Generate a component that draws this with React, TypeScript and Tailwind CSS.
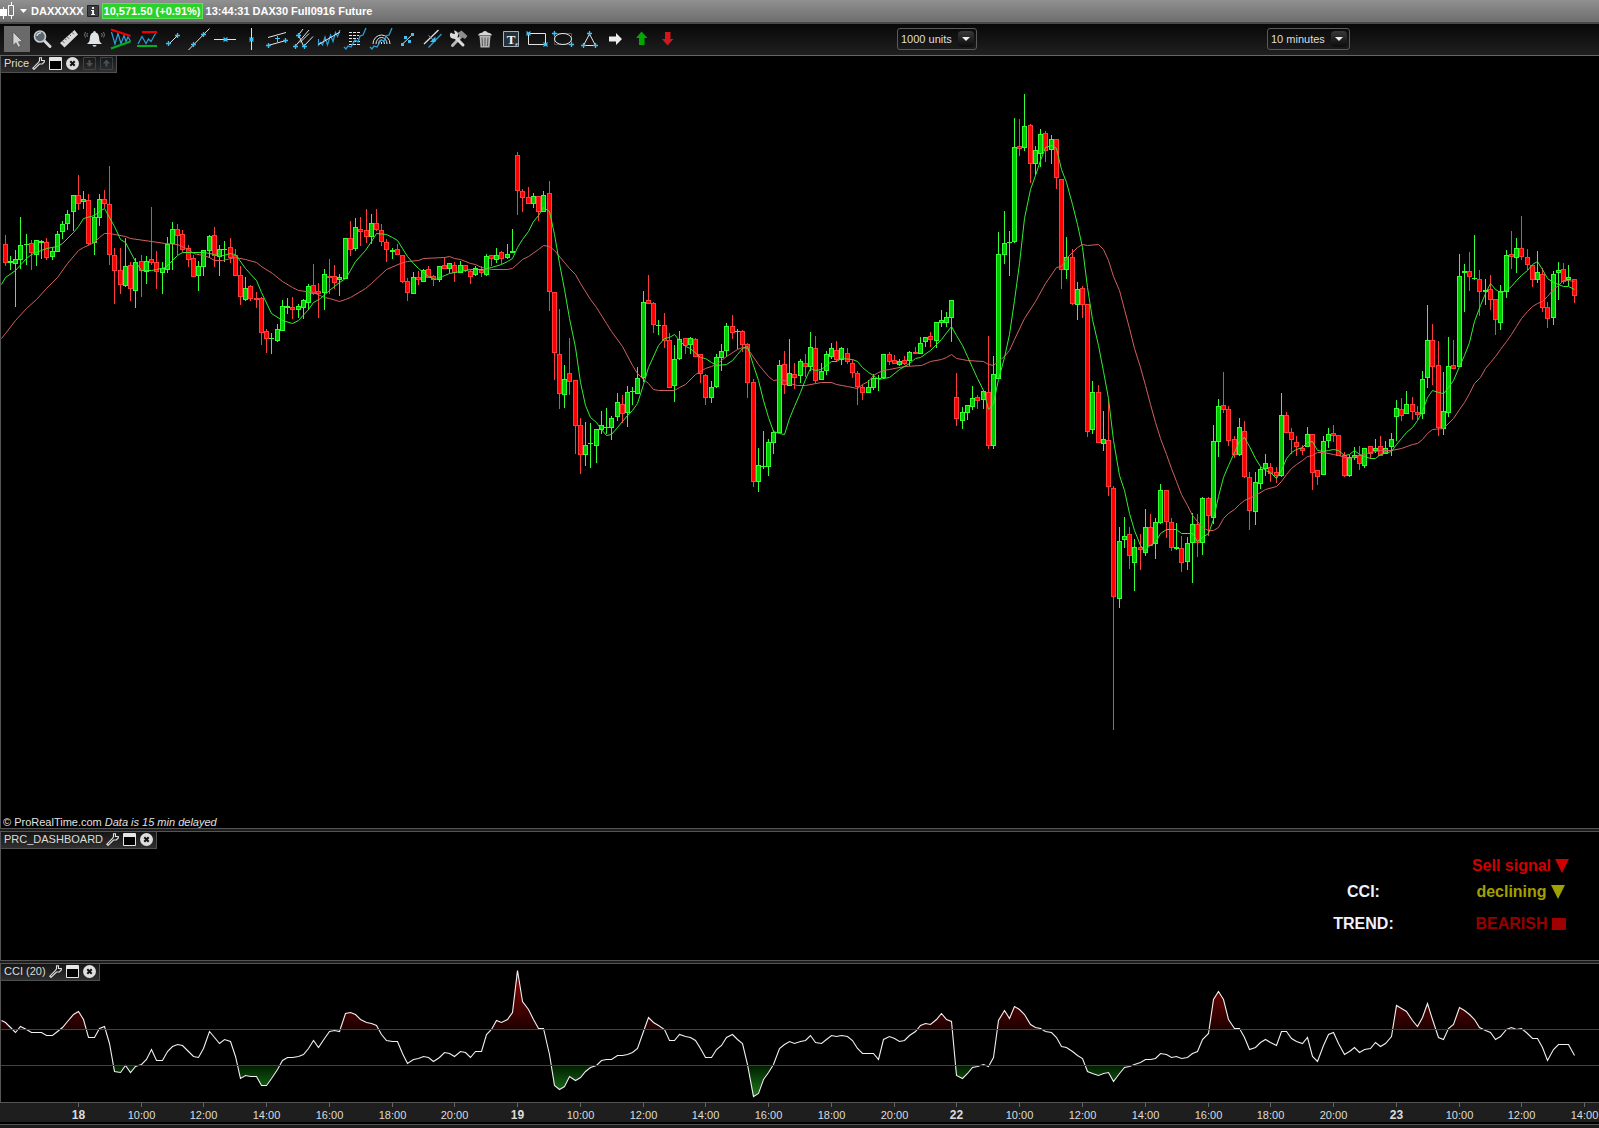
import type { ReactNode } from 'react';

const CHART_W = 1599;
const STEP = 5.23;
const OFFSET = 5.13;
const UPPER = 1029;
const LOWER = 1065;

const barX = (i: number) => Math.floor(OFFSET + i * STEP);

// direction, high, body top, body bottom, low (pane coordinates)
type Candle = ['u' | 'd', number, number, number, number];

const candles: Candle[] = [
  ['d', 235, 244, 262, 265], ['u', 256, 261, 262, 269], ['u', 250, 259, 263, 306], ['u', 217, 245, 259, 268],
  ['u', 234, 244, 244, 264], ['d', 240, 243, 252, 269], ['u', 240, 240, 254, 265], ['u', 240, 241, 242, 258],
  ['d', 238, 242, 257, 259], ['u', 248, 251, 256, 259], ['u', 231, 234, 251, 251], ['u', 221, 224, 231, 238],
  ['u', 210, 214, 223, 229], ['u', 195, 195, 211, 230], ['d', 175, 195, 203, 209], ['u', 191, 199, 201, 208],
  ['d', 194, 200, 243, 244], ['u', 208, 217, 242, 254], ['u', 194, 199, 217, 225], ['d', 190, 199, 203, 207],
  ['d', 166, 204, 254, 264], ['d', 248, 255, 270, 303], ['d', 248, 270, 284, 293], ['u', 238, 266, 285, 286],
  ['d', 262, 265, 288, 300], ['u', 258, 262, 290, 307], ['d', 255, 261, 270, 296], ['u', 256, 261, 271, 283],
  ['d', 207, 259, 262, 264], ['d', 251, 262, 271, 288], ['u', 262, 268, 272, 293], ['u', 237, 244, 269, 272],
  ['u', 222, 229, 243, 269], ['d', 224, 229, 235, 254], ['d', 230, 234, 249, 251], ['d', 245, 248, 259, 266],
  ['d', 255, 258, 276, 276], ['u', 261, 266, 275, 290], ['u', 250, 250, 266, 275], ['u', 235, 236, 250, 257],
  ['d', 227, 235, 255, 266], ['u', 245, 249, 256, 275], ['u', 241, 249, 249, 261], ['d', 238, 247, 257, 262],
  ['d', 249, 255, 275, 275], ['d', 266, 275, 296, 304], ['u', 277, 288, 299, 300], ['d', 285, 286, 298, 300],
  ['d', 292, 298, 299, 307], ['d', 297, 298, 332, 344], ['d', 329, 331, 338, 352], ['u', 333, 338, 338, 353],
  ['u', 324, 329, 340, 341], ['u', 300, 306, 330, 330], ['u', 298, 306, 307, 313], ['d', 297, 307, 309, 318],
  ['u', 304, 306, 309, 317], ['u', 299, 300, 307, 318], ['u', 284, 286, 302, 309], ['d', 264, 285, 293, 294],
  ['d', 283, 291, 293, 317], ['u', 269, 274, 292, 309], ['d', 259, 276, 277, 293], ['d', 265, 276, 282, 288],
  ['u', 274, 277, 279, 295], ['u', 238, 238, 278, 278], ['d', 221, 238, 249, 255], ['u', 218, 227, 248, 250],
  ['d', 217, 229, 231, 245], ['d', 209, 230, 236, 242], ['u', 214, 223, 236, 243], ['d', 209, 223, 229, 230],
  ['d', 224, 230, 241, 245], ['d', 239, 242, 249, 261], ['u', 248, 250, 251, 258], ['d', 244, 249, 254, 254],
  ['d', 255, 255, 281, 282], ['d', 278, 281, 292, 300], ['u', 272, 277, 293, 293], ['d', 271, 277, 279, 284],
  ['u', 269, 270, 281, 281], ['d', 266, 269, 277, 277], ['d', 275, 276, 279, 285], ['u', 266, 266, 279, 281],
  ['d', 257, 265, 268, 268], ['u', 263, 263, 268, 272], ['d', 262, 265, 272, 281], ['u', 261, 265, 272, 272],
  ['d', 265, 265, 270, 271], ['d', 270, 271, 276, 283], ['u', 266, 268, 274, 275], ['d', 266, 270, 272, 276],
  ['u', 254, 256, 274, 275], ['d', 255, 255, 258, 265], ['u', 248, 255, 259, 262], ['d', 251, 252, 258, 263],
  ['u', 244, 254, 257, 258], ['u', 229, 251, 252, 252], ['d', 152, 155, 190, 214], ['d', 189, 191, 197, 211],
  ['d', 187, 197, 203, 203], ['u', 193, 196, 203, 207], ['d', 196, 196, 211, 220], ['u', 191, 195, 211, 211],
  ['d', 181, 193, 291, 310], ['d', 292, 292, 352, 379], ['d', 309, 354, 393, 408], ['u', 365, 379, 394, 407],
  ['d', 338, 373, 381, 394], ['d', 380, 380, 425, 453], ['d', 418, 425, 454, 473], ['u', 422, 445, 454, 465],
  ['u', 423, 443, 443, 467], ['u', 429, 429, 445, 462], ['u', 411, 425, 429, 433], ['u', 408, 427, 427, 433],
  ['u', 416, 418, 427, 439], ['u', 393, 402, 416, 420], ['d', 395, 404, 413, 422], ['u', 386, 392, 412, 426],
  ['u', 387, 391, 391, 404], ['u', 367, 378, 393, 393], ['u', 291, 302, 377, 381], ['d', 275, 300, 303, 303],
  ['d', 302, 303, 324, 332], ['u', 320, 325, 325, 334], ['d', 313, 325, 340, 347], ['d', 333, 340, 387, 387],
  ['u', 345, 359, 385, 401], ['u', 331, 339, 358, 359], ['d', 338, 338, 345, 353], ['u', 337, 338, 344, 353],
  ['d', 338, 339, 356, 356], ['d', 354, 354, 373, 382], ['d', 374, 375, 397, 404], ['u', 381, 387, 397, 402],
  ['u', 354, 357, 386, 387], ['u', 344, 351, 357, 370], ['u', 323, 326, 350, 356], ['d', 315, 326, 332, 338],
  ['u', 329, 331, 331, 348], ['d', 330, 331, 344, 351], ['d', 343, 344, 382, 397], ['d', 379, 382, 481, 486],
  ['u', 448, 465, 481, 491], ['u', 431, 466, 466, 468], ['u', 439, 442, 466, 475], ['u', 430, 432, 442, 453],
  ['u', 360, 365, 432, 432], ['d', 351, 364, 384, 393], ['u', 339, 373, 385, 385], ['d', 363, 374, 377, 388],
  ['u', 359, 361, 375, 382], ['d', 354, 363, 366, 376], ['u', 332, 347, 366, 370], ['d', 336, 348, 380, 382],
  ['u', 363, 371, 379, 379], ['u', 351, 354, 370, 374], ['u', 343, 348, 356, 358], ['d', 341, 350, 359, 361],
  ['u', 347, 348, 359, 364], ['d', 348, 353, 361, 363], ['d', 360, 363, 372, 377], ['d', 371, 373, 386, 404],
  ['d', 385, 387, 392, 399], ['u', 380, 387, 392, 392], ['u', 374, 378, 387, 389], ['u', 375, 378, 378, 390],
  ['u', 354, 354, 377, 378], ['d', 352, 354, 361, 364], ['d', 355, 360, 363, 363], ['u', 359, 361, 364, 365],
  ['d', 356, 360, 363, 364], ['u', 351, 352, 360, 365], ['d', 347, 352, 353, 353], ['u', 337, 343, 353, 353],
  ['u', 337, 337, 341, 346], ['d', 332, 336, 339, 346], ['u', 322, 322, 340, 347], ['u', 310, 320, 322, 326],
  ['u', 312, 317, 322, 326], ['u', 300, 300, 317, 341], ['d', 373, 397, 418, 425], ['u', 407, 412, 420, 428],
  ['u', 405, 405, 412, 419], ['u', 386, 398, 406, 409], ['d', 395, 397, 400, 408], ['u', 390, 391, 399, 408],
  ['d', 336, 392, 445, 448], ['u', 356, 374, 445, 448], ['u', 232, 254, 378, 378], ['u', 211, 243, 254, 263],
  ['u', 231, 242, 242, 275], ['u', 118, 147, 241, 242], ['d', 119, 146, 148, 155], ['u', 94, 126, 147, 150],
  ['d', 124, 125, 163, 182], ['u', 146, 150, 163, 174], ['u', 129, 134, 153, 166], ['d', 131, 133, 150, 161],
  ['u', 135, 139, 149, 163], ['d', 139, 139, 177, 188], ['d', 179, 179, 269, 288], ['u', 237, 257, 269, 278],
  ['d', 249, 257, 303, 304], ['u', 282, 289, 304, 319], ['d', 286, 288, 304, 317], ['d', 304, 304, 431, 436],
  ['u', 381, 392, 429, 433], ['d', 385, 392, 442, 442], ['u', 411, 439, 443, 450], ['d', 401, 440, 486, 495],
  ['d', 486, 488, 596, 729], ['u', 527, 541, 598, 607], ['u', 517, 536, 539, 547], ['d', 527, 534, 555, 568],
  ['u', 539, 547, 562, 590], ['d', 534, 547, 549, 569], ['u', 509, 527, 552, 555], ['d', 514, 527, 545, 545],
  ['u', 518, 522, 543, 558], ['u', 484, 490, 522, 523], ['d', 490, 490, 521, 537], ['d', 518, 522, 547, 550],
  ['u', 523, 547, 548, 549], ['d', 536, 548, 562, 571], ['u', 537, 543, 561, 569], ['u', 513, 524, 542, 582],
  ['d', 514, 524, 542, 556], ['u', 497, 498, 542, 554], ['d', 497, 498, 515, 535], ['u', 425, 441, 517, 523],
  ['u', 399, 406, 441, 456], ['d', 372, 405, 409, 412], ['d', 406, 409, 440, 445], ['d', 436, 439, 454, 457],
  ['u', 418, 427, 454, 455], ['d', 421, 431, 476, 477], ['d', 472, 477, 510, 529], ['u', 472, 482, 511, 524],
  ['u', 467, 469, 483, 488], ['u', 454, 463, 468, 475], ['d', 463, 467, 473, 481], ['d', 467, 472, 475, 482],
  ['u', 393, 415, 475, 476], ['d', 412, 415, 432, 432], ['d', 428, 432, 439, 453], ['d', 436, 442, 446, 455],
  ['d', 445, 448, 450, 454], ['u', 427, 434, 446, 446], ['d', 434, 434, 472, 489], ['d', 470, 470, 476, 484],
  ['u', 436, 441, 474, 474], ['u', 428, 434, 440, 447], ['d', 425, 433, 435, 441], ['d', 435, 435, 455, 455],
  ['d', 452, 455, 475, 476], ['u', 455, 457, 475, 476], ['u', 447, 455, 457, 459], ['d', 446, 455, 463, 469],
  ['u', 448, 448, 465, 467], ['d', 446, 446, 453, 458], ['u', 439, 448, 450, 452], ['d', 436, 446, 455, 455],
  ['u', 441, 448, 453, 453], ['u', 433, 439, 446, 455], ['u', 400, 408, 416, 440], ['d', 398, 409, 415, 420],
  ['u', 391, 404, 413, 413], ['d', 397, 404, 411, 419], ['d', 406, 412, 414, 419], ['u', 371, 379, 413, 418],
  ['u', 305, 340, 377, 387], ['d', 324, 340, 366, 384], ['d', 341, 365, 427, 435], ['u', 372, 411, 428, 434],
  ['u', 337, 366, 412, 416], ['d', 340, 365, 368, 368], ['u', 254, 276, 366, 366], ['u', 264, 271, 272, 311],
  ['d', 252, 271, 276, 290], ['u', 235, 278, 278, 279], ['d', 270, 279, 291, 315], ['u', 279, 290, 291, 304],
  ['d', 275, 289, 299, 309], ['d', 299, 299, 319, 334], ['u', 285, 291, 322, 329], ['u', 250, 255, 291, 297],
  ['d', 231, 254, 256, 268], ['u', 238, 248, 257, 272], ['d', 216, 248, 256, 259], ['d', 249, 257, 264, 269],
  ['d', 265, 265, 279, 286], ['u', 251, 272, 279, 282], ['d', 268, 274, 307, 311], ['d', 302, 307, 318, 327],
  ['u', 271, 274, 317, 324], ['u', 262, 270, 272, 299], ['d', 263, 269, 281, 283], ['u', 265, 277, 279, 285],
  ['d', 279, 279, 295, 302],
];

const fastAverage =
  '1,284 5,277 15,270 26,258 31,254 46,248 57,246 62,243 73,232 78,226 83,218 94,215 99,211 104,208 109,217 114,226 120,239 125,242 135,261 141,270 151,270 156,269 165,267 177,255 182,252 204,252 214,254 219,256 230,253 235,254 245,268 256,280 261,292 271,313 282,320 292,323 298,320 308,309 313,302 320,298 329,290 339,282 345,278 350,270 355,261 365,250 371,241 376,233 386,234 392,237 397,240 402,248 407,256 413,263 418,268 423,272 428,276 435,279 442,276 449,273 460,271 470,269 483,269 491,267 501,264 507,261 512,258 517,247 522,239 528,231 533,221 538,215 543,207 549,211 554,234 559,263 564,289 569,318 575,347 580,382 585,405 590,417 596,422 601,429 606,435 611,434 617,427 622,421 627,415 632,410 637,403 643,384 648,367 658,345 664,338 669,337 674,334 679,340 685,346 690,348 700,357 705,358 711,362 716,365 726,364 732,360 737,354 742,348 747,346 753,365 758,380 763,400 768,417 773,431 779,433 784,434 789,418 794,406 800,392 805,379 810,368 815,370 821,369 831,361 836,361 841,358 852,359 857,361 862,367 868,372 873,375 878,379 889,377 899,369 909,363 915,358 920,357 930,350 941,339 951,326 956,335 962,345 967,356 972,367 977,378 983,390 988,409 993,403 998,379 1004,357 1009,334 1014,300 1019,263 1024,218 1030,189 1035,175 1040,160 1045,147 1051,145 1056,148 1061,169 1066,182 1072,204 1077,224 1082,247 1087,287 1092,319 1098,345 1103,371 1108,398 1113,440 1119,475 1124,490 1129,513 1134,530 1140,545 1145,551 1148,546 1155,542 1160,533 1166,529 1176,529 1181,533 1192,533 1197,541 1202,537 1208,533 1213,519 1218,496 1223,477 1228,465 1234,452 1239,441 1244,437 1249,446 1255,458 1260,466 1265,470 1270,472 1276,478 1281,470 1286,458 1291,452 1296,449 1302,447 1307,442 1312,441 1317,450 1323,451 1328,450 1333,449 1338,450 1344,455 1349,454 1354,450 1359,454 1364,456 1370,458 1375,458 1380,454 1391,451 1396,444 1401,438 1406,432 1412,427 1417,420 1422,411 1427,397 1432,390 1438,392 1443,393 1448,387 1453,380 1459,366 1464,355 1469,342 1474,321 1480,305 1485,293 1490,283 1495,289 1500,292 1506,290 1511,286 1516,280 1521,275 1527,270 1532,264 1537,261 1542,269 1547,278 1553,282 1558,284 1563,286 1568,286 1574,289';

const slowAverage =
  '1,338 5,333 15,320 26,308 36,299 46,288 57,277 67,263 78,250 83,247 94,242 99,237 104,233 109,233 125,236 130,238 151,241 165,243 177,244 188,249 193,253 203,255 209,257 214,260 222,260 235,257 245,259 256,262 261,266 272,273 282,281 292,287 298,290 313,292 324,297 329,298 339,301 345,299 350,297 365,288 371,283 386,269 400,263 407,261 418,260 423,258 444,257 449,256 454,258 460,259 470,263 475,264 481,267 491,269 507,269 512,268 522,259 528,256 538,249 543,245 549,246 554,250 564,262 569,268 575,274 580,283 590,299 596,307 606,323 611,331 622,346 632,365 637,373 643,379 648,383 653,389 658,390 674,390 679,387 685,384 695,374 700,371 705,368 711,366 716,364 726,356 737,349 742,347 747,348 758,364 768,376 773,380 779,379 784,380 789,383 797,385 805,385 821,382 831,382 836,384 847,386 857,388 862,384 868,381 873,375 878,372 883,370 889,369 904,366 921,365 930,361 941,359 946,357 951,354 956,358 962,359 967,360 983,361 988,364 993,365 1004,356 1009,350 1014,339 1024,318 1035,301 1045,283 1056,267 1061,266 1066,258 1077,247 1082,244 1087,245 1098,244 1103,249 1108,260 1113,276 1119,290 1124,309 1129,328 1134,348 1140,367 1145,385 1150,404 1155,422 1160,438 1166,454 1171,468 1176,481 1181,494 1187,505 1192,515 1197,521 1202,527 1208,530 1213,530 1218,527 1223,518 1228,513 1234,509 1239,504 1244,500 1255,495 1265,489 1276,486 1281,481 1286,474 1291,468 1296,464 1302,460 1307,456 1312,455 1317,452 1323,452 1333,454 1338,455 1349,458 1359,455 1370,452 1380,450 1391,450 1401,448 1412,444 1417,443 1422,439 1427,433 1432,429 1443,428 1453,418 1459,409 1464,402 1469,393 1474,383 1480,377 1485,368 1490,362 1495,356 1500,349 1506,341 1511,334 1516,326 1521,318 1527,311 1532,306 1537,303 1542,301 1547,296 1553,289 1558,285 1563,280 1568,280 1574,281';

const cci = [
  1022, 1027, 1032, 1026, 1029, 1032, 1032, 1032, 1035, 1035, 1031, 1027, 1021, 1014, 1011, 1019, 1037, 1037, 1028, 1026,
  1043, 1071, 1072, 1065, 1072, 1066, 1064, 1059, 1049, 1060, 1060, 1051, 1046, 1044, 1045, 1051, 1056, 1057, 1048, 1031,
  1037, 1043, 1039, 1041, 1056, 1078, 1075, 1076, 1076, 1085, 1085, 1078, 1069, 1060, 1057, 1057, 1056, 1054, 1048, 1040,
  1047, 1038, 1031, 1030, 1031, 1013, 1012, 1014, 1019, 1022, 1023, 1025, 1034, 1040, 1041, 1041, 1053, 1063, 1059, 1058,
  1056, 1057, 1061, 1057, 1052, 1053, 1056, 1051, 1052, 1057, 1051, 1051, 1034, 1029, 1020, 1022, 1019, 1012, 970, 1001,
  1009, 1019, 1028, 1028, 1054, 1085, 1089, 1086, 1076, 1080, 1077, 1071, 1067, 1065, 1060, 1059, 1059, 1055, 1055, 1054,
  1052, 1048, 1031, 1017, 1022, 1025, 1029, 1040, 1040, 1034, 1036, 1037, 1040, 1048, 1057, 1057, 1049, 1045, 1037, 1034,
  1039, 1043, 1064, 1096, 1093, 1079, 1072, 1064, 1048, 1044, 1041, 1043, 1041, 1040, 1035, 1042, 1043, 1039, 1035, 1036,
  1035, 1036, 1040, 1048, 1053, 1053, 1053, 1059, 1039, 1036, 1038, 1041, 1040, 1035, 1031, 1025, 1023, 1024, 1019, 1013,
  1019, 1021, 1075, 1078, 1073, 1067, 1066, 1064, 1066, 1057, 1020, 1010, 1018, 1006, 1009, 1014, 1024, 1027, 1028, 1031,
  1032, 1037, 1046, 1047, 1051, 1055, 1058, 1071, 1073, 1075, 1073, 1072, 1081, 1073, 1067, 1066, 1064, 1062, 1059, 1059,
  1058, 1053, 1054, 1057, 1056, 1058, 1057, 1053, 1051, 1039, 1033, 999, 991, 999, 1019, 1028, 1028, 1037, 1049, 1047,
  1042, 1039, 1042, 1045, 1031, 1031, 1038, 1041, 1043, 1037, 1056, 1061, 1045, 1034, 1032, 1043, 1054, 1051, 1047, 1052,
  1049, 1048, 1042, 1046, 1043, 1036, 1005, 1008, 1011, 1020, 1026, 1017, 1003, 1019, 1037, 1039, 1028, 1024, 1007, 1010,
  1014, 1019, 1027, 1030, 1032, 1039, 1036, 1029, 1027, 1029, 1028, 1033, 1038, 1038, 1047, 1060, 1049, 1044, 1044, 1044,
  1055,
];

const days = ['18', '19', '22', '23'];
const hours = ['10:00', '12:00', '14:00', '16:00', '18:00', '20:00'];

const ticks = Array.from({ length: 25 }, (_, k) => ({
  x: barX(14 + k * 12),
  label: k % 7 === 0 ? days[k / 7] : hours[(k % 7) - 1],
  bold: k % 7 === 0,
}));

const BLUE = '#3fc1f5';
const INK = '#e4e4e4';

function Plus({ x, y }: { x: number; y: number }) {
  return <path d={`M${x - 2.5} ${y}h5M${x} ${y - 2.5}v5`} stroke={BLUE} strokeWidth="1.3" />;
}

function Cross({ x, y }: { x: number; y: number }) {
  return (
    <path
      d={`M${x - 2} ${y - 2}l4 4M${x + 2} ${y - 2}l-4 4M${x - 2} ${y}h4`}
      stroke={BLUE}
      strokeWidth="1.1"
    />
  );
}

const tools: { name: string; icon: ReactNode }[] = [
  {
    name: 'Select',
    icon: <path d="M9 6v13.5l3-2.7 2.2 4.4 2.4-1.1-2.2-4.3 4-.4z" fill="#d2d2d2" stroke="#444" strokeWidth=".6" />,
  },
  {
    name: 'Zoom',
    icon: (
      <>
        <path d="M14.5 15l5.5 5.5" stroke="#d8d8d8" strokeWidth="3" strokeLinecap="round" />
        <circle cx="10" cy="10.5" r="5.5" fill="#5b666d" stroke="#c6ccd0" strokeWidth="1.6" />
        <path d="M7 10a3.5 3.5 0 0 1 4-3" stroke="#dfe6ea" strokeWidth="1.3" />
      </>
    ),
  },
  {
    name: 'Measure',
    icon: (
      <>
        <path d="M18.5 4l3.5 4.5L8.5 21.5l-4.500-4.500z" fill="#dcdcdc" />
        <path d="M6.500 15l2 2M9 12.700l1.500 1.500M11 10.700l2 2M13.500 8.500l1.500 1.500M16 6.300l2 2" stroke="#555" />
      </>
    ),
  },
  {
    name: 'Alert',
    icon: (
      <>
        <path d="M12.500 5c1 0 1.300.8 1.300 1.500 2.500.8 3.200 3 3.400 6 .1 2.500.8 4 2.800 5.500H5c2-1.500 2.700-3 2.800-5.500.2-3 .9-5.200 3.400-6 0-.7.3-1.500 1.300-1.500z" fill="#dfe3e6" />
        <path d="M10.500 19h4a2 1.800 0 0 1-4 0z" fill="#cfd3d6" />
        <path d="M5.500 7q-1.500 2 0 4M3.500 6q-2 3 0 5.500M19.500 7q1.500 2 0 4M21.500 6q2 3 0 5.500" stroke="#8a8a8a" strokeWidth=".8" />
      </>
    ),
  },
  {
    name: 'Triangle pattern',
    icon: (
      <>
        <path d="M3.500 6l3.500 12 3-10.500 3 10 3-8 2 6 2-4.500 2.500 4" stroke="#2f9fd8" strokeWidth="1.200" />
        <path d="M3 3.500l19.500 6.500" stroke="#f00000" strokeWidth="2.200" />
        <path d="M3 22.500l19.500-7" stroke="#00b020" strokeWidth="2.200" />
      </>
    ),
  },
  {
    name: 'Support and resistance',
    icon: (
      <>
        <path d="M4 18l4-7.500 4 7 2.500-4.500 2.500 2.500 4.500-8" stroke="#2f9fd8" strokeWidth="1.200" />
        <path d="M8 6h15" stroke="#f00000" strokeWidth="2" />
        <path d="M3 20h20" stroke="#00b020" strokeWidth="2" />
      </>
    ),
  },
  {
    name: 'Segment',
    icon: (
      <>
        <path d="M9 18l9-9" stroke={INK} />
        <Plus x={8.5} y={17.5} />
        <Plus x={17.5} y={9.5} />
      </>
    ),
  },
  {
    name: 'Trend line',
    icon: (
      <>
        <path d="M2.500 24L23.500 2.500" stroke={INK} />
        <Plus x={7.5} y={18.5} />
        <Plus x={17.5} y={8.5} />
      </>
    ),
  },
  {
    name: 'Horizontal line',
    icon: (
      <>
        <path d="M2 13.500h22" stroke={INK} />
        <Cross x={13.5} y={13.5} />
      </>
    ),
  },
  {
    name: 'Vertical line',
    icon: (
      <>
        <path d="M13.500 2v22" stroke={INK} />
        <Cross x={13.5} y={13.5} />
      </>
    ),
  },
  {
    name: 'Channel',
    icon: (
      <>
        <path d="M4 11.500l18-5M4 19.500l18-5" stroke={INK} />
        <path d="M13.500 10v7M11 12.500h5" stroke={BLUE} />
        <Plus x={4.5} y={19.5} />
        <Plus x={21.5} y={14.5} />
      </>
    ),
  },
  {
    name: 'Pitchfork',
    icon: (
      <>
        <path d="M8.500 9L13 3M5 20.500L19 4M10 16.500l9-9M13.500 20.500l9.500-10M8.500 9l5 11" stroke={INK} />
        <Plus x={8.5} y={9.5} />
        <Plus x={5.5} y={20.5} />
        <Plus x={14.5} y={20.5} />
      </>
    ),
  },
  {
    name: 'Regression',
    icon: (
      <>
        <path d="M2.500 13v6l2-2.500 2 2.500 2.500-8 2.500 8 3-10 2.500 6.500 2.500-9 2 4 2.500-6.500" stroke="#2f9fd8" strokeWidth="1.200" />
        <path d="M2.500 18.500L24 6" stroke={INK} />
      </>
    ),
  },
  {
    name: 'Fibonacci',
    icon: (
      <>
        <path d="M7 6.500h12M7 9.500h10M7 12.500h9M7 15.500h12M7 18.500h12" stroke={INK} strokeDasharray="3 1" />
        <path d="M2 21l2 2 2-3 3 1 4-7 3 2 2-6 3-1 3-7" stroke="#2f9fd8" strokeWidth="1.300" />
      </>
    ),
  },
  {
    name: 'Fibonacci arcs',
    icon: (
      <>
        <path d="M5 18a8.500 9 0 0 1 17 0M8 18a5.500 6.500 0 0 1 11 0M10.500 18a3 4 0 0 1 6 0M13.500 18v-2" stroke={INK} />
        <path d="M2 21l2 2 2-3 3 1 4-7 3 1 2-5 3-1 3-7" stroke="#2f9fd8" strokeWidth="1.300" />
      </>
    ),
  },
  {
    name: 'Point to point',
    icon: (
      <>
        <path d="M8 18.500L18.500 8.500" stroke={INK} />
        <path d="M7 17h3v3H7zM17 7h3v3h-3zM10 10h3v3h-3zM14 14h3v3h-3z" fill={BLUE} />
      </>
    ),
  },
  {
    name: 'Parallel line',
    icon: (
      <>
        <path d="M4 18L18.500 4" stroke={INK} strokeWidth="1.200" />
        <path d="M8.500 21.500L21.500 8" stroke="#2f9fd8" strokeWidth="1.200" />
        <path d="M8.500 9.500l6 5.500" stroke={BLUE} />
        <path d="M15.500 10.500V16H10z" fill={BLUE} />
      </>
    ),
  },
  {
    name: 'Settings',
    icon: (
      <>
        <path d="M6.500 19.500l9.500-10" stroke="#b9b9b9" strokeWidth="3" strokeLinecap="round" />
        <path d="M11.500 7l4-2.500 6 5.500-2.500 3-2.500-1.500-1.500 1z" fill="#8d8d8d" />
        <path d="M7 9l10 10" stroke="#dcdcdc" strokeWidth="3" strokeLinecap="round" />
        <path d="M4 8l1-1.500 2.500 2 1.500-1-1-3a4 4 0 0 1 4 5A4 4 0 0 1 4 8z" fill="#dcdcdc" />
      </>
    ),
  },
  {
    name: 'Delete',
    icon: (
      <>
        <path d="M7.500 10h11l-1 11.500h-9z" fill="#b4b4b4" />
        <path d="M10 11.500l.5 8.500M13 11.500v8.500M16 11.500l-.5 8.500" stroke="#555" />
        <path d="M6 9.500Q6.500 7 10.500 6.500q.3-1.500 2.500-1.500t2.500 1.500Q19.500 7 20 9.500z" fill="#d6d6d6" />
      </>
    ),
  },
  {
    name: 'Text',
    icon: (
      <>
        <path d="M5.500 5.500h15v15h-15z" fill="#25323b" stroke="#a9b1b6" />
        <path d="M17.500 20.500v-3h3z" fill="#c9d0d4" />
        <text x="13" y="17.500" textAnchor="middle" fontSize="13" fontWeight="bold" fill="#f4f4f4" className="font-['Liberation_Serif',serif]">
          T
        </text>
      </>
    ),
  },
  {
    name: 'Rectangle',
    icon: (
      <>
        <path d="M4.500 7.500h17v11h-17z" stroke={INK} />
        <Cross x={4.5} y={7.5} />
        <Cross x={21.5} y={18.5} />
      </>
    ),
  },
  {
    name: 'Ellipse',
    icon: (
      <>
        <path d="M4.500 7.500h17v11h-17z" stroke="#555" />
        <ellipse cx="13" cy="13" rx="8.500" ry="5.500" stroke={INK} />
        <Plus x={4.5} y={7.5} />
        <Plus x={21.5} y={18.5} />
      </>
    ),
  },
  {
    name: 'Triangle',
    icon: (
      <>
        <path d="M13.500 8l6 11.500h-12z" stroke={INK} />
        <Plus x={13.5} y={7.5} />
        <Plus x={7.5} y={19.5} />
        <Plus x={19.5} y={19.5} />
      </>
    ),
  },
  { name: 'Arrow right', icon: <path d="M7 10.500h7V7l6 6-6 6v-3.500H7z" fill="#ececec" /> },
  { name: 'Arrow up', icon: <path d="M13.500 5.500l6 6.500h-3v7h-5.500v-7H8z" fill="#00a800" /> },
  { name: 'Arrow down', icon: <path d="M13.500 19.500l6-6.500h-3V6H11v7H8z" fill="#d0181c" /> },
];

function WrenchIcon() {
  return (
    <svg width="13" height="13" viewBox="0 0 13 13" fill="none" stroke="#e2e2e2" strokeWidth="1.100">
      <path d="M7.500.8v3L6 6 .8 11.200l1.200 1.200L7.500 7h2.800l2-2V3.500H9.500V.8z" />
    </svg>
  );
}

function WindowIcon() {
  return (
    <svg width="13" height="13" viewBox="0 0 13 13">
      <rect width="13" height="13" rx="1" fill="#e6e6e6" />
      <rect x="1" y="4" width="11" height="8" fill="#000" />
    </svg>
  );
}

function CloseIcon() {
  return (
    <svg width="13" height="13" viewBox="0 0 13 13">
      <circle cx="6.500" cy="6.500" r="6.500" fill="#dedede" />
      <path d="M4.300 4.300l4.400 4.400M8.700 4.300L4.300 8.700" stroke="#111" strokeWidth="2" />
    </svg>
  );
}

function MoveIcon({ up = false }: { up?: boolean }) {
  return (
    <svg width="13" height="13" viewBox="0 0 13 13" fill="none">
      <path d="M8.500.5h-8v12h12v-8M9 .5h3.500V4" stroke="#39434a" />
      <path d={up ? 'M6.500 2.500l3.500 4H7.500v3h-2v-3H3z' : 'M6.500 10l3.500-4H7.500V3h-2v3H3z'} fill="#46525a" />
    </svg>
  );
}

function PaneTab({ title, movable = false }: { title: string; movable?: boolean }) {
  return (
    <div className="absolute top-0 left-0 flex h-[17px] items-center gap-1 border-r border-b border-[#505050] bg-linear-to-b from-[#151515] to-[#303030] px-[3px] pb-[2px]">
      <span className="-mr-px text-[11px] leading-[14px] text-[#dcdcdc]">{title}</span>
      <button aria-label={`${title} settings`}><WrenchIcon /></button>
      <button aria-label={`Maximize ${title}`}><WindowIcon /></button>
      <button aria-label={`Close ${title}`}><CloseIcon /></button>
      {movable && (
        <>
          <button aria-label={`Move ${title} down`}><MoveIcon /></button>
          <button aria-label={`Move ${title} up`}><MoveIcon up /></button>
        </>
      )}
    </div>
  );
}

function Dropdown({ label, value, className }: { label: string; value: string; className: string }) {
  return (
    <div className={`relative mt-[2px] h-[22px] shrink-0 ${className}`}>
      <select
        aria-label={label}
        defaultValue={value}
        className="block h-full w-full appearance-none rounded-[3px] border border-[#5a5a5a] bg-transparent pl-[3px] text-[11px] text-[#dedede]"
      >
        <option>{value}</option>
      </select>
      <span className="pointer-events-none absolute top-[3px] right-[3px] flex size-4 items-center justify-center rounded-sm bg-linear-to-b from-[#3a3a3a] to-[#0c0c0c]">
        <svg width="8" height="4" viewBox="0 0 8 4"><path d="M0 0h8L4 4z" fill="#eee" /></svg>
      </span>
    </div>
  );
}

function TitleBar() {
  return (
    <header className="flex h-6 items-center border-b-2 border-[#484848] bg-linear-to-b from-[#909090] to-[#6e6e6e] text-[11px] font-bold text-white">
      <svg width="16" height="18" viewBox="0 0 16 18" fill="none" stroke="#fff">
        <path d="M0 7h7v7H0z" fill="#fff" stroke="none" />
        <path d="M3.500 5v12M8.500 3.500h5v10h-5zM11.500 0v3M11.500 14v3" />
      </svg>
      <svg className="mx-1" width="7" height="4" viewBox="0 0 7 4"><path d="M0 0h7L3.500 4z" fill="#fff" /></svg>
      <h1>DAXXXXX</h1>
      <button aria-label="Information" className="mx-[3px]">
        <svg width="12" height="12" viewBox="0 0 12 12">
          <path d="M.5.5h11v11H.5z" fill="#3a3d40" stroke="#222" />
          <path d="M5 2h2v2H5zM4 5h3v4h1v1H4V9h1V6H4z" fill="#eee" />
        </svg>
      </button>
      <span className="border border-[#5ae65a] bg-[#2bd22b] px-px leading-[14px]">10,571.50 (+0.91%)</span>
      <span className="ml-[3px]">13:44:31</span>
      <span className="ml-[3px]">DAX30 Full0916 Future</span>
    </header>
  );
}

function Toolbar() {
  return (
    <div className="flex h-8 items-start border-b border-[#666] bg-linear-to-b from-[#080808] to-[#202020] pt-[2px] pl-1">
      {tools.map(({ name, icon }, i) => (
        <button key={name} aria-label={name} className={`size-[26px] shrink-0 ${i === 0 ? 'bg-[#6a6a6a]' : ''}`}>
          <svg width="26" height="26" viewBox="0 0 26 26" fill="none">{icon}</svg>
        </button>
      ))}
      <div className="flex-[217]" />
      <Dropdown label="Units" value="1000 units" className="w-20" />
      <div className="flex-[290]" />
      <Dropdown label="Timeframe" value="10 minutes" className="w-[83px]" />
      <div className="flex-[249]" />
    </div>
  );
}

function PriceChart() {
  return (
    <svg className="block h-[772px] w-full" viewBox="1 56 1598 772" preserveAspectRatio="none" fill="none">
      <g shapeRendering="crispEdges">
        {candles.map(([dir, high, top, bottom, low], i) => {
          const x = barX(i);
          const edge = dir === 'u' ? '#33ff33' : '#ff3c3c';
          return (
            <g key={i}>
              <rect x={x} y={high} width="1" height={low - high + 1} fill={edge} />
              <rect x={x - 2} y={top} width="5" height={bottom - top + 1} fill={edge} />
              {bottom - top > 1 && (
                <rect x={x - 1} y={top + 1} width="3" height={bottom - top - 1} fill={dir === 'u' ? '#00c800' : '#ff0000'} />
              )}
            </g>
          );
        })}
      </g>
      <polyline points={slowAverage} stroke="#d26060" transform="translate(.5 .5)" />
      <polyline points={fastAverage} stroke="#30ee30" transform="translate(.5 .5)" />
    </svg>
  );
}

function CciChart() {
  const line = `1,1020 ${cci.map((y, i) => `${barX(i)},${y}`).join(' ')}`;
  return (
    <svg className="block h-[138px] w-full" viewBox="1 964 1598 138" preserveAspectRatio="none" fill="none">
      <defs>
        <linearGradient id="overbought" gradientUnits="userSpaceOnUse" x1="0" y1={UPPER} x2="0" y2="970">
          <stop offset="0" stopColor="#1e0000" />
          <stop offset="1" stopColor="#900000" />
        </linearGradient>
        <linearGradient id="oversold" gradientUnits="userSpaceOnUse" x1="0" y1={LOWER} x2="0" y2="1097">
          <stop offset="0" stopColor="#001c00" />
          <stop offset="1" stopColor="#1c7c1c" />
        </linearGradient>
        <clipPath id="above"><rect x="0" y="960" width={CHART_W} height={UPPER - 960} /></clipPath>
        <clipPath id="below"><rect x="0" y={LOWER} width={CHART_W} height="40" /></clipPath>
      </defs>
      <polygon points={`1,${UPPER} ${line} 1574,${UPPER}`} fill="url(#overbought)" clipPath="url(#above)" />
      <polygon points={`1,${LOWER} ${line} 1574,${LOWER}`} fill="url(#oversold)" clipPath="url(#below)" />
      <polyline points={line} stroke="#f0f0f0" strokeWidth="1.100" transform="translate(.5 .5)" />
      <path d={`M0 ${UPPER}.5H${CHART_W}M0 ${LOWER}.5H${CHART_W}`} stroke="#3030d0" />
    </svg>
  );
}

function Dashboard() {
  return (
    <dl className="ml-auto grid w-[314px] grid-cols-2 pt-[22px] text-center text-base font-bold text-[#f0f0ff]">
      <dt />
      <dd className="flex items-center justify-center gap-1 text-[#d00000]">
        Sell signal
        <svg width="14" height="14" viewBox="0 0 14 14"><path d="M0 0h14L7 14z" fill="#d00000" /></svg>
      </dd>
      <dt className="mt-[2px]">CCI:</dt>
      <dd className="mt-[2px] flex items-center justify-center gap-1 text-[#a0a000]">
        declining
        <svg width="14" height="14" viewBox="0 0 14 14"><path d="M0 0h14L7 14z" fill="#a0a000" /></svg>
      </dd>
      <dt className="mt-2">TREND:</dt>
      <dd className="mt-2 flex items-center justify-center gap-1 text-[#980000]">
        BEARISH
        <svg width="14" height="12" viewBox="0 0 14 12"><path d="M0 0h14v12H0z" fill="#a00000" /></svg>
      </dd>
    </dl>
  );
}

function TimeAxis() {
  return (
    <div className="relative h-[19px] overflow-hidden bg-[#1e1e1e]">
      {ticks.map(({ x, label, bold }) => (
        <div
          key={x}
          className="absolute top-0 flex w-10 -translate-x-1/2 flex-col items-center text-[#dcdcdc]"
          style={{ left: `${((x + 0.5) / CHART_W) * 100}%` }}
        >
          <span className="h-1 w-px bg-[#666]" />
          <span className={bold ? 'text-xs leading-4 font-bold' : 'text-[11px] leading-4'}>{label}</span>
        </div>
      ))}
    </div>
  );
}

export default function App() {
  return (
    <main className="flex min-h-screen flex-col overflow-hidden bg-[#1c1c1c] font-['Liberation_Sans',Arial,sans-serif]">
      <TitleBar />
      <Toolbar />
      <section className="relative border-b border-l border-[#555] bg-black">
        <PaneTab title="Price" movable />
        <PriceChart />
        <p className="absolute bottom-0 left-[2px] flex gap-[3px] text-[11px] leading-3 text-[#e0e0e0]">
          <span>© ProRealTime.com</span>
          <em>Data is 15 min delayed</em>
        </p>
      </section>
      <section className="relative mt-[2px] h-[130px] border-y border-l border-[#555] bg-black">
        <PaneTab title="PRC_DASHBOARD" />
        <Dashboard />
      </section>
      <section className="relative mt-[2px] border-y border-l border-[#555] bg-black">
        <PaneTab title="CCI (20)" />
        <CciChart />
      </section>
      <TimeAxis />
      <div className="h-[3px] border-b border-[#555] bg-black" />
    </main>
  );
}
